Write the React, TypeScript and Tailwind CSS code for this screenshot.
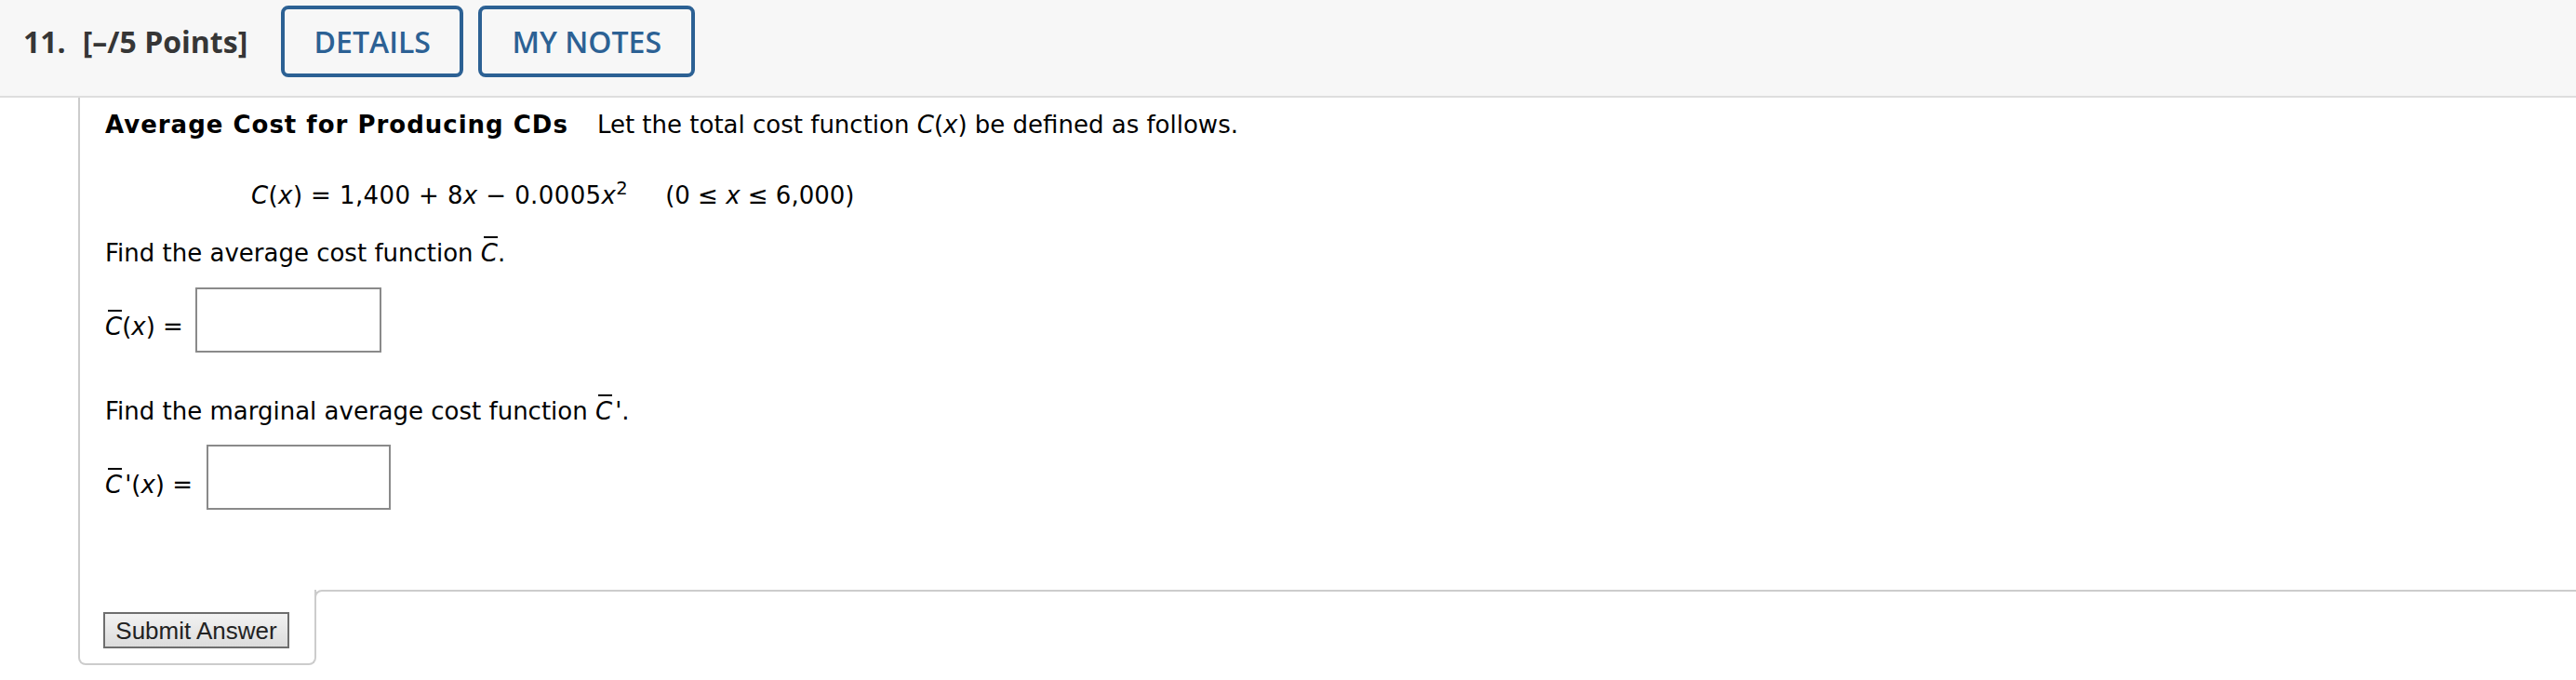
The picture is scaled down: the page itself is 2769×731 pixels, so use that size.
const line = 'border-[#cccccc]'

function Bar({ children }: { children: string }) {
  // letter with an overline drawn above it
  return (
    <span className="relative italic">
      {children}
      <span className="absolute left-[3px] right-[0px] top-[-3px] h-[2px] bg-black" />
    </span>
  )
}

function Answer({ label, width, gap, offset }: { label: React.ReactNode; width: string; gap: string; offset: string }) {
  return (
    <div className="flex items-start">
      <span className={`whitespace-nowrap ${offset}`}>{label}</span>
      <input className={`h-[70px] ${width} ${gap} border-2 border-[#8a8a8a] bg-white outline-none`} />
    </div>
  )
}

export default function App() {
  return (
    <div className="min-h-screen w-full bg-white">
      <header className="flex items-center border-b-2 border-[#dedede] bg-[#f7f7f7] pb-[20px] pl-[25px] pt-[6px] font-['Open_Sans',sans-serif]">
        <span className="text-[32px] font-bold text-[#363636]">11.</span>
        <span className="ml-[18px] text-[32px] font-bold text-[#363636]">[–/5 Points]</span>
        <button className="ml-[36px] flex h-[77px] w-[196px] items-center justify-center rounded-[8px] border-[4px] border-[#2c6194] text-[32px] font-semibold text-[#2c6194]">
          DETAILS
        </button>
        <button className="ml-[16px] flex h-[77px] w-[233px] items-center justify-center rounded-[8px] border-[4px] border-[#2c6194] text-[32px] font-semibold text-[#2c6194]">
          MY NOTES
        </button>
      </header>

      <div className="ml-[84px] font-['DejaVu_Sans',Verdana,sans-serif] text-[26px] leading-[30px] text-black">
        <div className={`border-l-2 ${line} pb-[86px] pl-[27px] pt-[14px]`}>
          <p className="whitespace-nowrap">
            <span className="font-bold tracking-[1px]">Average Cost for Producing CDs</span>
            <span className="ml-[31px]">
              Let the total cost function <i>C</i>(<i>x</i>) be defined as follows.
            </span>
          </p>

          <p className="mt-[46px] whitespace-nowrap pl-[157px]">
            <span className="tracking-[0.4px]">
              <i>C</i>(<i>x</i>) = 1,400 + 8<i>x</i> − 0.0005<i>x</i>
              <sup>2</sup>
            </span>
            <span className="ml-[40px]">
              (0 ≤ <i>x</i> ≤ 6,000)
            </span>
          </p>

          <p className="mt-[32px] whitespace-nowrap">
            Find the average cost function <Bar>C</Bar>.
          </p>

          <div className="mt-[22px]">
            <Answer
              label={
                <>
                  <Bar>C</Bar>(<i>x</i>) =
                </>
              }
              width="w-[200px]"
              gap="ml-[13px]"
              offset="mt-[27px]"
            />
          </div>

          <p className="mt-[48px] whitespace-nowrap">
            Find the marginal average cost function <Bar>C</Bar>
            <span className="ml-[3px]">'</span>.
          </p>

          <div className="mt-[21px]">
            <Answer
              label={
                <>
                  <Bar>C</Bar>
                  <span className="ml-[3px]">'</span>(<i>x</i>) =
                </>
              }
              width="w-[198px]"
              gap="ml-[15px]"
              offset="mt-[28px]"
            />
          </div>
        </div>

        <div className="flex">
          <div className={`w-[256px] shrink-0 rounded-b-[8px] border-x-2 border-b-2 ${line} pb-[16px] pl-[25px] pt-[24px]`}>
            <button className="h-[39px] w-[200px] border-2 border-[#6e6e6e] bg-gradient-to-b from-[#f2f2f2] to-[#dcdcdc] font-['Liberation_Sans',Arial,sans-serif] text-[26px] leading-[30px] text-[#222222]">
              Submit Answer
            </button>
          </div>
          <div className={`-ml-[2px] h-[14px] flex-1 rounded-tl-[8px] border-l-2 border-t-2 ${line}`} />
        </div>
      </div>
    </div>
  )
}
